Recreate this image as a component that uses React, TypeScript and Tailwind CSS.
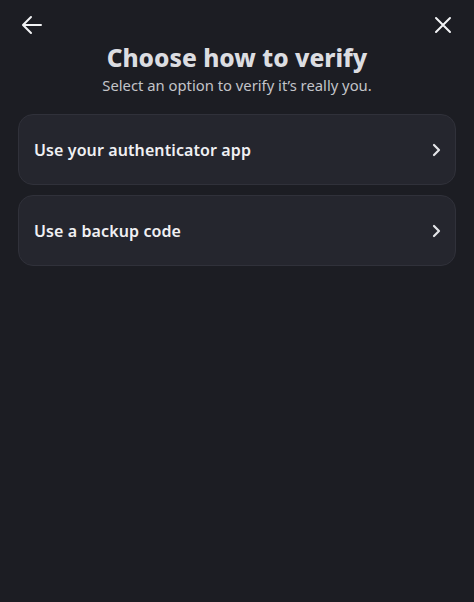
import React from "react";

const Chevron: React.FC = () => (
  <svg width="14" height="14" viewBox="0 0 14 14" fill="none">
    <path d="M5 2L10 7L5 12" stroke="#e4e5e8" strokeWidth="2.2" strokeLinecap="round" strokeLinejoin="round" />
  </svg>
);

const Option: React.FC<{ label: string }> = ({ label }) => (
  <button className="w-full h-[71px] pl-[15px] pr-[12px] flex items-center justify-between rounded-[15px] bg-[#25262e] border border-[#30313a] text-left">
    <span className="text-[#f0f0f3] text-[16px] font-semibold tracking-[0.1px]">{label}</span>
    <Chevron />
  </button>
);

export default function App() {
  return (
    <div className="w-[474px] h-[602px] bg-[#1c1d23] font-['Noto_Sans',sans-serif] flex flex-col">
      {/* Top bar */}
      <div className="h-[50px] px-[20px] flex items-center justify-between">
        <svg width="24" height="24" viewBox="0 0 24 24" fill="none">
          <path d="M21 12H3.5M11 4L3 12L11 20" stroke="#f2f3f5" strokeWidth="2" strokeLinecap="round" strokeLinejoin="round" />
        </svg>
        <svg width="20" height="20" viewBox="0 0 20 20" fill="none" className="mr-[1px]">
          <path d="M3 3L17 17M17 3L3 17" stroke="#f2f3f5" strokeWidth="2" strokeLinecap="round" />
        </svg>
      </div>

      {/* Heading */}
      <div className="flex flex-col items-center -mt-[9px]">
        <h1 className="text-[#dcdde1] text-[24.5px] leading-[34px] font-extrabold">Choose how to verify</h1>
        <p className="text-[#c3c4c9] text-[14.8px] leading-[20px]">Select an option to verify it’s really you.</p>
      </div>

      {/* Options */}
      <div className="px-[18px] mt-[19px] flex flex-col gap-[10px]">
        <Option label="Use your authenticator app" />
        <Option label="Use a backup code" />
      </div>
    </div>
  );
}
